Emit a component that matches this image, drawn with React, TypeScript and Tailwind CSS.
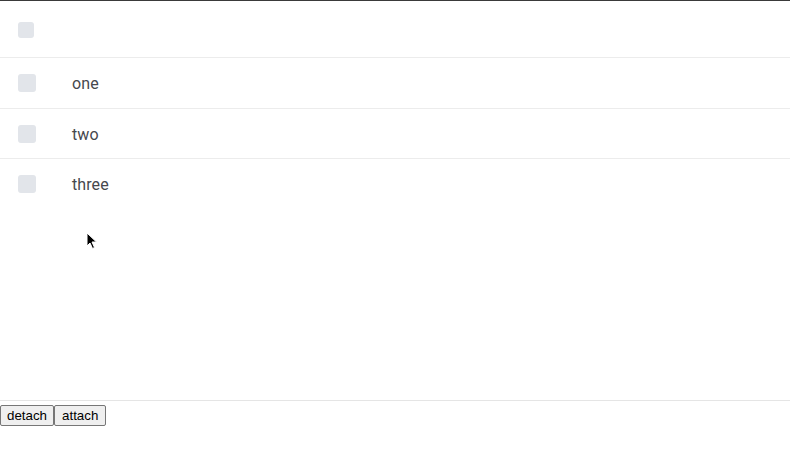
import React from 'react';

const ROWS = ['one', 'two', 'three'];

const Box = ({ small }: { small?: boolean }) => (
  <span className={`block rounded-[3px] bg-[#e2e5ea] ${small ? 'w-4 h-4' : 'w-[18px] h-[18px]'}`} />
);

export default function App() {
  return (
    <div className="relative w-[790px] h-[458px] bg-white font-['Roboto',sans-serif]">
      <div className="h-[401px] border-t border-t-[#3a3a3a] border-b border-b-[#e5e5e5] overflow-hidden">
        <div className="h-[57px] flex items-center pl-[18px] border-b border-[#ececec] pt-[2px]">
          <Box small />
        </div>
        {ROWS.map((r, i) => (
          <div
            key={r}
            className={`flex items-center ${i === 0 ? 'h-[51px]' : 'h-[50px]'} ${i < ROWS.length - 1 ? 'border-b border-[#ececec]' : ''}`}
          >
            <div className="w-[72px] pl-[18px]">
              <Box />
            </div>
            <span className="text-[16px] text-[#45484d] mt-[2px] tracking-[0.1px]">{r}</span>
          </div>
        ))}
      </div>
      <div className="flex pt-[4px]">
        <button className="px-[6px] h-[21px] text-[13.33px] leading-none font-['Liberation_Sans',Arial,sans-serif] bg-[#efefef] border border-[#767676] rounded-[2px] text-black">
          detach
        </button>
        <button className="px-[7px] h-[21px] text-[13.33px] leading-none font-['Liberation_Sans',Arial,sans-serif] bg-[#efefef] border border-[#767676] rounded-[2px] text-black">
          attach
        </button>
      </div>
      {/* mouse pointer */}
      <svg className="absolute left-[86px] top-[232px]" width="12" height="18" viewBox="0 0 12 18">
        <path d="M1 1 L1 14 L4 11 L6.5 16.5 L8.5 15.5 L6 10 L10.5 10 Z" fill="#000" stroke="#fff" strokeWidth="1" />
      </svg>
    </div>
  );
}
